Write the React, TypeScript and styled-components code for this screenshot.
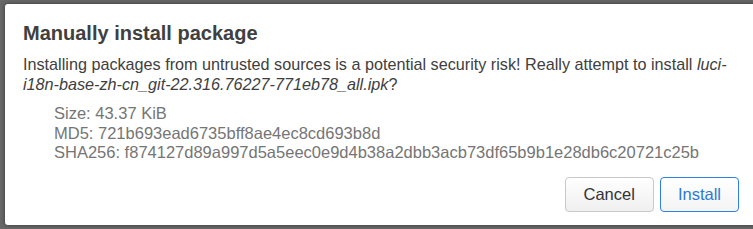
import React from "react";
import styled, { createGlobalStyle } from "styled-components";

const Global = createGlobalStyle`
  html, body { margin: 0; padding: 0; }
  body {
    background: #686868;
    font-family: "Liberation Sans", Arial, sans-serif;
    overflow: hidden;
  }
`;

const Overlay = styled.div`
  width: 753px;
  height: 229px;
  padding: 4px 0 0 5px;
  box-sizing: border-box;
  overflow: hidden;
`;

const Modal = styled.div`
  width: 752px;
  height: 221px;
  box-sizing: border-box;
  background: #fff;
  border-radius: 3px;
  box-shadow: 0 0 4px rgba(0, 0, 0, 0.5);
  padding: 17px 18px 0 18px;
  display: flex;
  flex-direction: column;
  color: #404040;
`;

const Title = styled.h4`
  margin: 0;
  font-size: 20px;
  font-weight: bold;
  line-height: 25px;
  color: #404040;
`;

const Message = styled.p`
  margin: 8px 0 0 0;
  font-size: 16.2px;
  line-height: 20px;
  padding-right: 0;
`;

const Info = styled.ul`
  list-style: none;
  margin: 10px 0 0 0;
  padding: 0 0 0 31px;
  font-size: 16.5px;
  line-height: 19.5px;
  color: #757575;
`;

const Actions = styled.div`
  display: flex;
  justify-content: flex-end;
  gap: 6px;
  margin-top: 14px;
`;

const Button = styled.button<{ $primary?: boolean }>`
  height: 35px;
  box-sizing: border-box;
  padding: 0 ${(p) => (p.$primary ? "17px" : "18px")};
  font-family: "Liberation Sans", Arial, sans-serif;
  font-size: 16.5px;
  border-radius: 4px;
  border: 1px solid ${(p) => (p.$primary ? "#2f80e0" : "#c8c8c8")};
  background: ${(p) =>
    p.$primary
      ? "linear-gradient(#ffffff, #f4f4f4)"
      : "linear-gradient(#ffffff, #efefef)"};
  color: ${(p) => (p.$primary ? "#2c7ad6" : "#333")};
  cursor: pointer;
`;

export default function App() {
  return (
    <>
      <Global />
      <Overlay>
        <Modal>
          <Title>Manually install package</Title>
          <Message>
            Installing packages from untrusted sources is a potential security
            risk! Really attempt to install{" "}
            <em>luci-i18n-base-zh-cn_git-22.316.76227-771eb78_all.ipk</em>?
          </Message>
          <Info>
            <li>Size: 43.37 KiB</li>
            <li>MD5: 721b693ead6735bff8ae4ec8cd693b8d</li>
            <li>
              SHA256:
              f874127d89a997d5a5eec0e9d4b38a2dbb3acb73df65b9b1e28db6c20721c25b
            </li>
          </Info>
          <Actions>
            <Button>Cancel</Button>
            <Button $primary>Install</Button>
          </Actions>
        </Modal>
      </Overlay>
    </>
  );
}
